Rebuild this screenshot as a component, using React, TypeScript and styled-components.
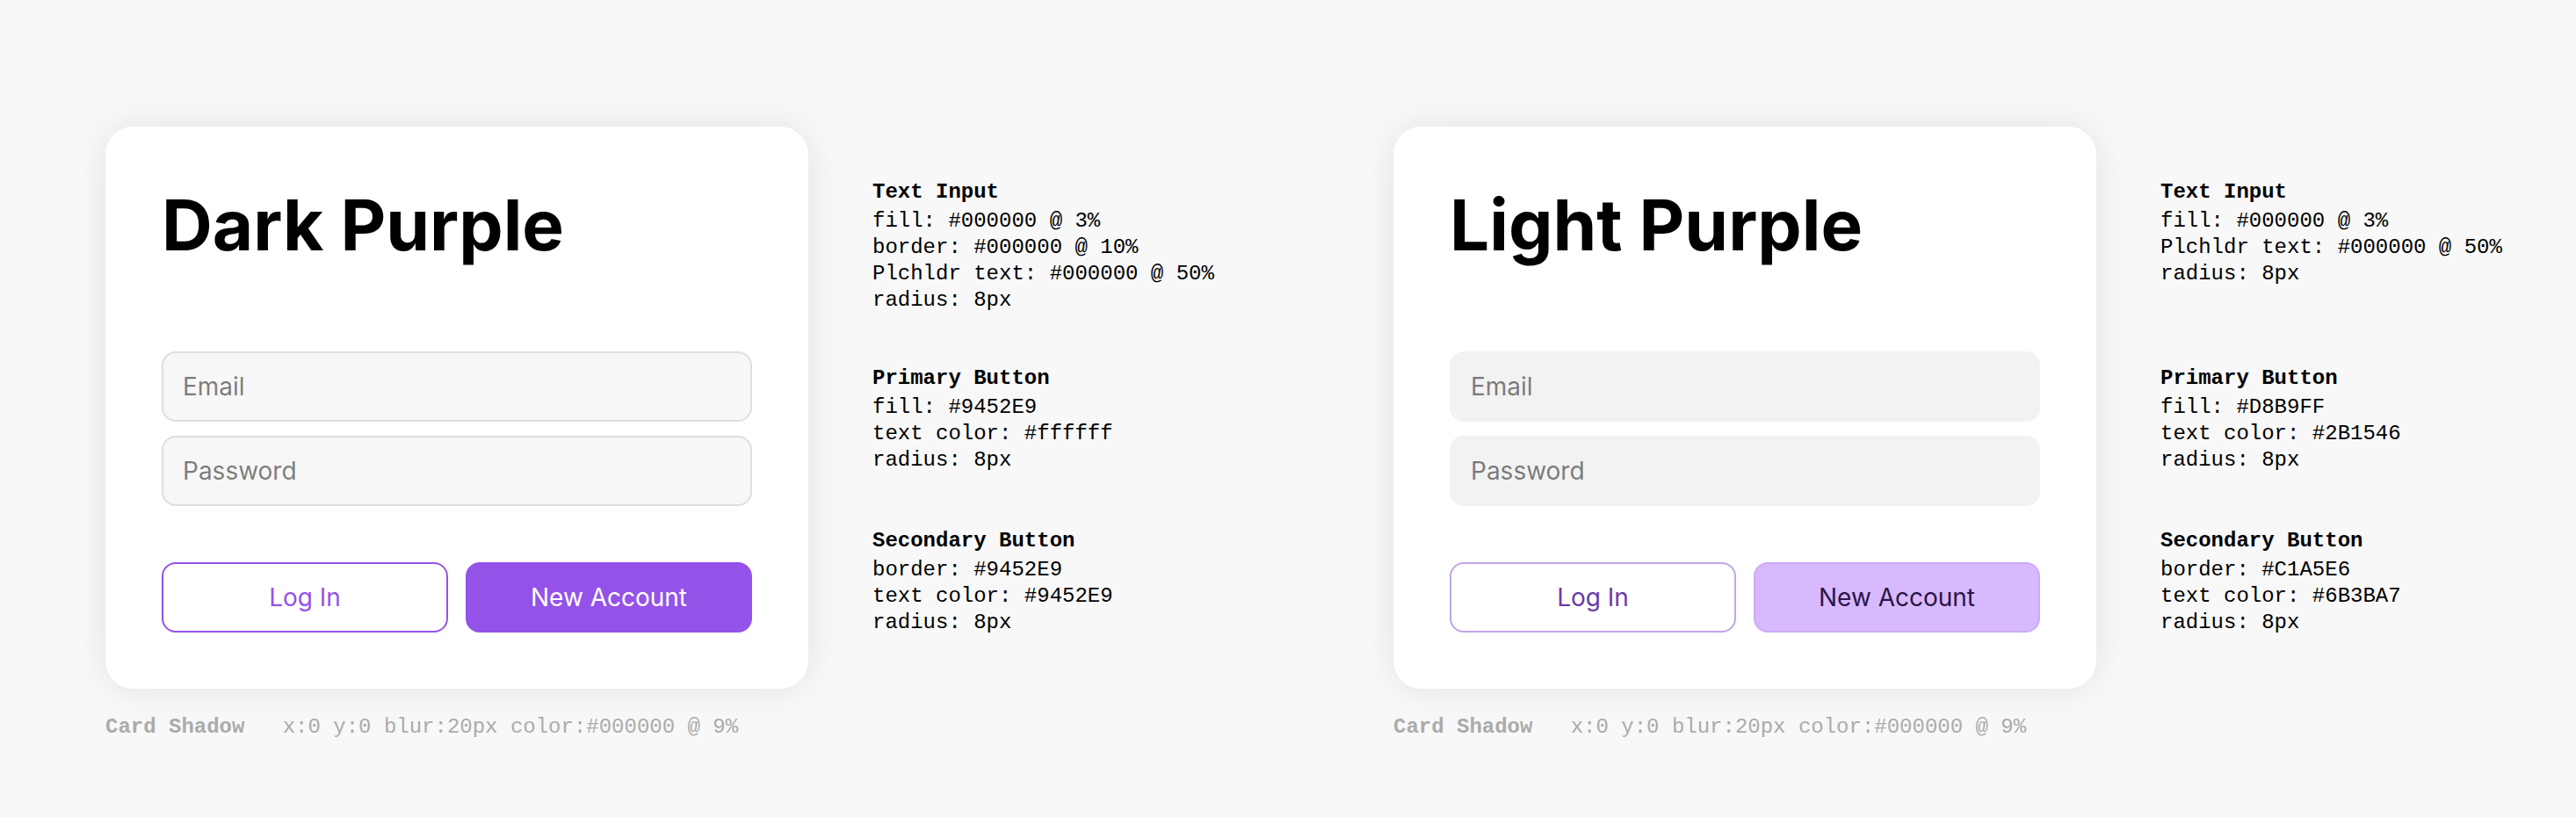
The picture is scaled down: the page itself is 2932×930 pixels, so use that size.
import {FC} from 'react';
import styled, {createGlobalStyle} from 'styled-components';

type Palette = {
  title: string;
  inputFill: string;
  inputBorder: string;
  primaryFill: string;
  primaryBorder: string;
  primaryText: string;
  secondaryBorder: string;
  secondaryText: string;
  notes: {heading: string; lines: string[]}[];
};

const darkPurple: Palette = {
  title: 'Dark Purple',
  inputFill: 'rgba(0, 0, 0, 0.03)',
  inputBorder: 'rgba(0, 0, 0, 0.1)',
  primaryFill: '#9452E9',
  primaryBorder: '#9452E9',
  primaryText: '#ffffff',
  secondaryBorder: '#9452E9',
  secondaryText: '#9452E9',
  notes: [
    {heading: 'Text Input', lines: ['fill: #000000 @ 3%', 'border: #000000 @ 10%', 'Plchldr text: #000000 @ 50%', 'radius: 8px']},
    {heading: 'Primary Button', lines: ['fill: #9452E9', 'text color: #ffffff', 'radius: 8px']},
    {heading: 'Secondary Button', lines: ['border: #9452E9', 'text color: #9452E9', 'radius: 8px']},
  ],
};

const lightPurple: Palette = {
  title: 'Light Purple',
  inputFill: 'rgba(0, 0, 0, 0.05)',
  inputBorder: 'transparent',
  primaryFill: '#D8B9FF',
  primaryBorder: '#CCABF6',
  primaryText: '#2B1546',
  secondaryBorder: '#C1A5E6',
  secondaryText: '#6B3BA7',
  notes: [
    {heading: 'Text Input', lines: ['fill: #000000 @ 3%', 'Plchldr text: #000000 @ 50%', 'radius: 8px']},
    {heading: 'Primary Button', lines: ['fill: #D8B9FF', 'text color: #2B1546', 'radius: 8px']},
    {heading: 'Secondary Button', lines: ['border: #C1A5E6', 'text color: #6B3BA7', 'radius: 8px']},
  ],
};

const App: FC = () => {
  return (
    <>
      <GlobalStyle/>
      <Page>
        {[darkPurple, lightPurple].map((p) => (
          <Half key={p.title}>
            <CardColumn>
              <Card>
                <Title>{p.title}</Title>
                <Fields>
                  <Field placeholder="Email" $fill={p.inputFill} $border={p.inputBorder}/>
                  <Field placeholder="Password" type="password" $fill={p.inputFill} $border={p.inputBorder}/>
                </Fields>
                <Actions>
                  <ActionButton $fill="#ffffff" $border={p.secondaryBorder} $text={p.secondaryText}>
                    Log In
                  </ActionButton>
                  <ActionButton $fill={p.primaryFill} $border={p.primaryBorder} $text={p.primaryText}>
                    New Account
                  </ActionButton>
                </Actions>
              </Card>
              <Caption>
                <strong>Card Shadow</strong>{'   '}x:0 y:0 blur:20px color:#000000 @ 9%
              </Caption>
            </CardColumn>
            <Notes>
              {p.notes.map((n) => (
                <NoteBlock key={n.heading}>
                  <NoteHeading>{n.heading}</NoteHeading>
                  {n.lines.map((l) => (
                    <NoteLine key={l}>{l}</NoteLine>
                  ))}
                </NoteBlock>
              ))}
            </Notes>
          </Half>
        ))}
      </Page>
    </>
  );
};
export default App;

const GlobalStyle = createGlobalStyle`
  html, body {
    margin: 0;
    padding: 0;
    background: #f8f8f8;
  }
  * {
    box-sizing: border-box;
  }
`;

const Page = styled.div`
  display: grid;
  grid-template-columns: 1fr 1fr;
  height: 930px;
  overflow: hidden;
  background: #f8f8f8;
`;

const Half = styled.section`
  display: flex;
  align-items: flex-start;
  gap: 73px;
  padding: 144px 0 0 120px;
`;

const CardColumn = styled.div`
  display: flex;
  flex-direction: column;
`;

const Card = styled.div`
  width: 800px;
  height: 640px;
  padding: 64px;
  background: #ffffff;
  border-radius: 32px;
  box-shadow: 0 0 40px rgba(0, 0, 0, 0.09);
  display: flex;
  flex-direction: column;
`;

const Title = styled.h1`
  margin: 0 0 96px;
  font-family: Inter, "Noto Sans", sans-serif;
  font-size: 80px;
  font-weight: 700;
  line-height: 96px;
  color: #000000;
`;

const Fields = styled.div`
  display: flex;
  flex-direction: column;
  gap: 16px;
`;

const Field = styled.input<{ $fill: string; $border: string }>`
  height: 80px;
  width: 100%;
  padding: 0 22px;
  border: 2px solid ${(p) => p.$border};
  border-radius: 16px;
  background: ${(p) => p.$fill};
  font-family: Inter, "Noto Sans", sans-serif;
  font-size: 28px;
  color: #000000;
  outline: none;

  &::placeholder {
    color: rgba(0, 0, 0, 0.5);
  }
`;

const Actions = styled.div`
  display: grid;
  grid-template-columns: 1fr 1fr;
  gap: 20px;
  margin-top: 64px;
`;

const ActionButton = styled.button<{ $fill: string; $border: string; $text: string }>`
  height: 80px;
  border: 2px solid ${(p) => p.$border};
  border-radius: 16px;
  background: ${(p) => p.$fill};
  color: ${(p) => p.$text};
  font-family: Inter, "Noto Sans", sans-serif;
  font-size: 28px;
  font-weight: 400;
  cursor: pointer;
`;

const Caption = styled.div`
  margin-top: 29px;
  font-family: "Liberation Mono", "Courier New", monospace;
  font-size: 24px;
  line-height: 30px;
  color: #ababab;
  white-space: pre;

  strong {
    font-weight: 700;
  }
`;

const Notes = styled.div`
  display: grid;
  grid-template-rows: 212px 185px auto;
  padding-top: 60px;
`;

const NoteBlock = styled.div`
  display: flex;
  flex-direction: column;
`;

const NoteHeading = styled.div`
  margin-bottom: 3px;
  font-family: "Liberation Mono", "Courier New", monospace;
  font-size: 24px;
  font-weight: 700;
  line-height: 30px;
  color: #000000;
  white-space: pre;
`;

const NoteLine = styled.div`
  font-family: "Liberation Mono", "Courier New", monospace;
  font-size: 24px;
  line-height: 30px;
  color: #000000;
  white-space: pre;
`;
